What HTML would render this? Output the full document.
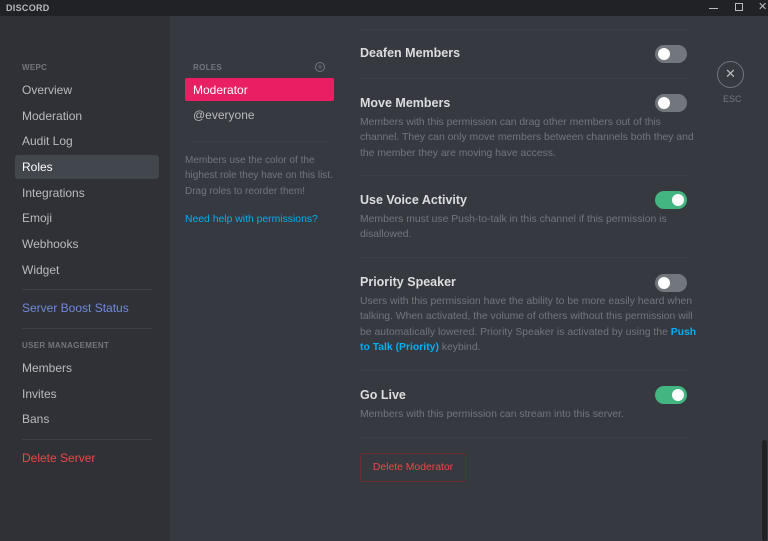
<!DOCTYPE html>
<html><head><style>
*{margin:0;padding:0;box-sizing:border-box}
body{width:768px;height:541px;overflow:hidden;background:#36393f;font-family:"Liberation Sans",sans-serif;position:relative}
.a{position:absolute;white-space:nowrap}
.tb{left:0;top:0;width:768px;height:16px;background:#202225}
.sb{left:0;top:16px;width:170px;height:525px;background:#2f3136}
.ni{left:22px;font-size:12px;color:#b9bbbe}
.hd{font-size:8px;font-weight:bold;color:#72767d;letter-spacing:.3px}
.hr{height:1px;background:#3c3f45}
.t{left:360px;font-size:12.5px;font-weight:bold;color:#dcddde}
.d{left:360px;font-size:10.4px;line-height:15.3px;color:#72767d}
.tg{left:655px;width:32px;height:18px;border-radius:9px;background:#72767d}
.tg i{position:absolute;top:3px;left:3px;width:12px;height:12px;border-radius:50%;background:#fff}
.tg.on{background:#43b581}.tg.on i{left:17px}
</style></head><body>
<div class="a tb"></div>
<div class="a" style="left:6px;top:3px;font-size:9px;font-weight:bold;color:#b9bbbe;letter-spacing:.3px">DISCORD</div>
<div class="a" style="left:709px;top:8px;width:9px;height:1px;background:#b9bbbe"></div>
<div class="a" style="left:735px;top:3px;width:8px;height:8px;border:1px solid #b9bbbe"></div>
<div class="a" style="left:758px;top:0px;font-size:11px;color:#b9bbbe">✕</div>
<div class="a sb"></div>
<div class="a hd" style="left:22px;top:63px">WEPC</div>
<div class="a ni" style="top:83px">Overview</div>
<div class="a ni" style="top:109px">Moderation</div>
<div class="a ni" style="top:134px">Audit Log</div>
<div class="a" style="left:15px;top:155px;width:144px;height:24px;background:#42464d;border-radius:3px"></div>
<div class="a ni" style="top:160px;color:#fff">Roles</div>
<div class="a ni" style="top:186px">Integrations</div>
<div class="a ni" style="top:211px">Emoji</div>
<div class="a ni" style="top:237px">Webhooks</div>
<div class="a ni" style="top:263px">Widget</div>
<div class="a hr" style="left:22px;top:289px;width:130px"></div>
<div class="a ni" style="top:301px;color:#7289da">Server Boost Status</div>
<div class="a hr" style="left:22px;top:328px;width:130px"></div>
<div class="a hd" style="left:22px;top:341px">USER MANAGEMENT</div>
<div class="a ni" style="top:361px">Members</div>
<div class="a ni" style="top:387px">Invites</div>
<div class="a ni" style="top:412px">Bans</div>
<div class="a hr" style="left:22px;top:439px;width:130px"></div>
<div class="a ni" style="top:451px;color:#f04747">Delete Server</div>

<div class="a hd" style="left:193px;top:63px">ROLES</div>
<div class="a" style="left:315px;top:62px;width:10px;height:10px;border:1px solid #72767d;border-radius:50%;font-size:9px;line-height:8px;text-align:center;color:#72767d">+</div>
<div class="a" style="left:185px;top:78px;width:149px;height:23px;background:#e91e63;border-radius:2px"></div>
<div class="a" style="left:193px;top:83px;font-size:12px;color:#fff">Moderator</div>
<div class="a" style="left:193px;top:108px;font-size:12px;color:#b9bbbe">@everyone</div>
<div class="a" style="left:193px;top:141px;width:133px;height:1px;background:#3c3f45"></div>
<div class="a" style="left:185px;top:153px;font-size:10px;line-height:15.3px;color:#72767d">Members use the color of the<br>highest role they have on this list.<br>Drag roles to reorder them!</div>
<div class="a" style="left:185px;top:214px;font-size:10.4px;color:#00b0f4">Need help with permissions?</div>

<div class="a hr" style="left:360px;top:29px;width:327px"></div>
<div class="a t" style="top:46px">Deafen Members</div>
<div class="a tg" style="top:45px"><i></i></div>
<div class="a hr" style="left:360px;top:78px;width:327px"></div>
<div class="a t" style="top:96px">Move Members</div>
<div class="a tg" style="top:94px"><i></i></div>
<div class="a d" style="top:115px">Members with this permission can drag other members out of this<br>channel. They can only move members between channels both they and<br>the member they are moving have access.</div>
<div class="a hr" style="left:360px;top:175px;width:327px"></div>
<div class="a t" style="top:193px">Use Voice Activity</div>
<div class="a tg on" style="top:191px"><i></i></div>
<div class="a d" style="top:212px">Members must use Push-to-talk in this channel if this permission is<br>disallowed.</div>
<div class="a hr" style="left:360px;top:257px;width:327px"></div>
<div class="a t" style="top:275px">Priority Speaker</div>
<div class="a tg" style="top:274px"><i></i></div>
<div class="a d" style="top:294px">Users with this permission have the ability to be more easily heard when<br>talking. When activated, the volume of others without this permission will<br>be automatically lowered. Priority Speaker is activated by using the <b style="color:#00b0f4">Push</b><br><b style="color:#00b0f4">to Talk (Priority)</b> keybind.</div>
<div class="a hr" style="left:360px;top:370px;width:327px"></div>
<div class="a t" style="top:388px">Go Live</div>
<div class="a tg on" style="top:386px"><i></i></div>
<div class="a d" style="top:407px">Members with this permission can stream into this server.</div>
<div class="a hr" style="left:360px;top:437px;width:327px"></div>
<div class="a" style="left:360px;top:453px;width:106px;height:29px;border:1px solid #6b2d30;border-radius:3px;font-size:10.4px;color:#f04747;text-align:center;line-height:27px">Delete Moderator</div>

<div class="a" style="left:717px;top:61px;width:27px;height:27px;border:1.5px solid #72767d;border-radius:50%;color:#b9bbbe;text-align:center;line-height:24px;font-size:13px">✕</div>
<div class="a" style="left:723px;top:94px;font-size:9px;color:#72767d">ESC</div>
<div class="a" style="left:762px;top:440px;width:5px;height:101px;background:#202225;border-radius:3px"></div>
</body></html>
